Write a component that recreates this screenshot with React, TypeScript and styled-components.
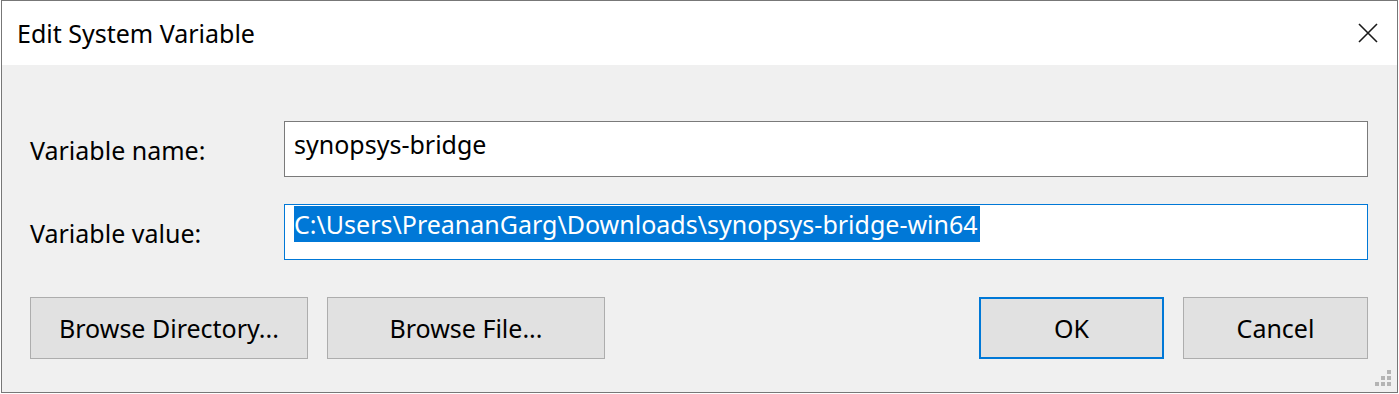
import React from "react";
import styled, {createGlobalStyle} from "styled-components";

const GlobalStyle = createGlobalStyle`
  html, body {
    margin: 0;
    padding: 0;
    background: #ffffff;
  }
  body {
    font-family: "Noto Sans", "Open Sans", sans-serif;
  }
`;

const Page = styled.div`
  width: 1399px;
  height: 394px;
  padding-left: 1px;
  box-sizing: border-box;
`;

const Window = styled.div`
  width: 1397px;
  height: 393px;
  box-sizing: border-box;
  border: 1px solid #777777;
  background: #f0f0f0;
  display: flex;
  flex-direction: column;
  position: relative;
`;

const TitleBar = styled.div`
  height: 64px;
  flex: 0 0 auto;
  background: #ffffff;
  display: flex;
  align-items: center;
  justify-content: space-between;
  padding: 0 18px 0 15px;
`;

const Title = styled.div`
  font-size: 25px;
  color: #000000;
  margin-top: -1px;
`;

const CloseButton = styled.button`
  border: none;
  background: transparent;
  padding: 0;
  width: 22px;
  height: 22px;
  display: flex;
  align-items: center;
  justify-content: center;
  margin-top: -1px;
`;

const Content = styled.div`
  flex: 1 1 auto;
  padding: 56px 29px 0 28px;
  display: flex;
  flex-direction: column;
`;

const FieldRow = styled.div`
  display: flex;
  align-items: center;
  height: 56px;
  margin-bottom: 27px;
`;

const Label = styled.label`
  width: 254px;
  flex: 0 0 auto;
  font-size: 25px;
  color: #000000;
  padding-top: 1px;
`;

const TextBox = styled.div<{$focused?: boolean}>`
  flex: 1 1 auto;
  height: 56px;
  box-sizing: border-box;
  background: #ffffff;
  border: 1px solid ${p => p.$focused ? "#0078d7" : "#7a7a7a"};
  padding: 0 9px;
  display: flex;
  align-items: center;
  font-size: 25px;
  color: #000000;
  white-space: nowrap;
`;

const Value = styled.span`
  margin-top: -10px;
`;

const Selected = styled.span`
  background: #0078d7;
  color: #ffffff;
  line-height: 36px;
  height: 36px;
  display: inline-block;
  margin-top: -16px;
  padding-right: 2px;
`;

const ButtonRow = styled.div`
  display: flex;
  justify-content: space-between;
  margin-top: 10px;
`;

const ButtonGroup = styled.div`
  display: flex;
  gap: 19px;
`;

const DialogButton = styled.button<{$wide?: boolean; $default?: boolean}>`
  width: ${p => p.$wide ? 278 : 185}px;
  height: 62px;
  box-sizing: border-box;
  background: #e1e1e1;
  border: ${p => p.$default ? "2px solid #0078d7" : "1px solid #adadad"};
  font-family: "Noto Sans", "Open Sans", sans-serif;
  font-size: 25px;
  color: #000000;
  padding: 0;
`;

const Grip = styled.svg`
  position: absolute;
  right: 4px;
  bottom: 4px;
`;

export default function App() {
  return (
    <Page>
      <GlobalStyle />
      <Window>
        <TitleBar>
          <Title>Edit System Variable</Title>
          <CloseButton aria-label="Close">
            <svg width="20" height="20" viewBox="0 0 20 20">
              <path d="M1 1 L19 19 M19 1 L1 19" stroke="#1a1a1a" strokeWidth="1.6" fill="none" />
            </svg>
          </CloseButton>
        </TitleBar>
        <Content>
          <FieldRow>
            <Label>Variable name:</Label>
            <TextBox><Value>synopsys-bridge</Value></TextBox>
          </FieldRow>
          <FieldRow>
            <Label>Variable value:</Label>
            <TextBox $focused>
              <Selected>C:\Users\PreananGarg\Downloads\synopsys-bridge-win64</Selected>
            </TextBox>
          </FieldRow>
          <ButtonRow>
            <ButtonGroup>
              <DialogButton $wide>Browse Directory...</DialogButton>
              <DialogButton $wide>Browse File...</DialogButton>
            </ButtonGroup>
            <ButtonGroup>
              <DialogButton $default>OK</DialogButton>
              <DialogButton>Cancel</DialogButton>
            </ButtonGroup>
          </ButtonRow>
        </Content>
        <Grip width="18" height="18" viewBox="0 0 18 18">
          <rect x="12" y="0" width="4" height="4" fill="#b4b4b4" />
          <rect x="6" y="6" width="4" height="4" fill="#b4b4b4" />
          <rect x="12" y="6" width="4" height="4" fill="#b4b4b4" />
          <rect x="0" y="12" width="4" height="4" fill="#b4b4b4" />
          <rect x="6" y="12" width="4" height="4" fill="#b4b4b4" />
          <rect x="12" y="12" width="4" height="4" fill="#b4b4b4" />
        </Grip>
      </Window>
    </Page>
  );
}
